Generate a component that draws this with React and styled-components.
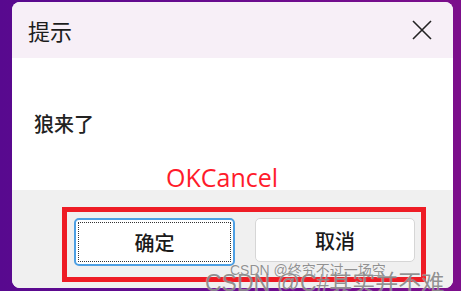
import styled, { createGlobalStyle } from 'styled-components';

const Global = createGlobalStyle`
  html, body {
    margin: 0;
    padding: 0;
    height: 291px;
    overflow: hidden;
  }
  body {
    font-family: "Noto Sans CJK SC", "Open Sans", sans-serif;
    background: linear-gradient(90deg, #58098f 0%, #6a0b8f 50%, #7c0e8b 100%);
  }
`;

const Screen = styled.div`
  position: relative;
  height: 291px;
  padding: 2px 8px 0 12px;
  box-sizing: border-box;
`;

const Dialog = styled.div`
  width: 441px;
  height: 286px;
  border-radius: 8px;
  overflow: hidden;
  display: flex;
  flex-direction: column;
  background: #fff;
`;

const TitleBar = styled.div`
  height: 56px;
  flex: none;
  background: #f7eff7;
  display: flex;
  align-items: center;
  justify-content: space-between;
  padding: 0 20px 0 16px;
`;

const Title = styled.span`
  font-size: 22px;
  color: #1c1c1c;
  line-height: 1;
`;

const Close = styled.button`
  width: 22px;
  height: 22px;
  padding: 0;
  border: 0;
  background: none;
  display: flex;
  align-items: center;
  justify-content: center;
`;

const Content = styled.div`
  height: 132px;
  flex: none;
  display: flex;
  flex-direction: column;
  padding: 56px 0 0 22px;
  box-sizing: border-box;
`;

const Message = styled.div`
  font-size: 20px;
  font-weight: 500;
  color: #222;
  line-height: 1;
`;

const Note = styled.div`
  margin: 31px 0 0 132px;
  font-family: "Open Sans", sans-serif;
  font-size: 25px;
  color: #ff1b2b;
  line-height: 1;
`;

const Footer = styled.div`
  flex: 1;
  background: #f0f0f0;
  padding: 17px 0 0 50px;
`;

const Frame = styled.div`
  width: 364px;
  height: 75px;
  box-sizing: border-box;
  border: 5px solid #ee1c25;
  display: flex;
  gap: 20px;
  padding: 6px 0 0 7px;
`;

const Button = styled.button`
  width: ${p => (p.$primary ? 161 : 160)}px;
  height: ${p => (p.$primary ? 48 : 44)}px;
  box-sizing: border-box;
  background: #fff;
  border: ${p => (p.$primary ? '2px solid #4d9fe3' : '1px solid #d6d6d6')};
  border-radius: 5px;
  outline: ${p => (p.$primary ? '1.5px dotted #333' : 'none')};
  outline-offset: -5px;
  font-family: "Noto Sans CJK SC", sans-serif;
  font-size: 20px;
  font-weight: 500;
  color: #1a1a1a;
  padding: 0;
`;

const Mark = styled.div`
  position: absolute;
  left: ${p => p.$x}px;
  top: ${p => p.$y}px;
  font-family: "Liberation Sans", "Noto Sans CJK SC", sans-serif;
  font-size: ${p => p.$size}px;
  color: rgba(110, 110, 110, 0.75);
  white-space: nowrap;
  text-shadow: 0 0 1px rgba(255, 255, 255, 0.8);
  line-height: 1;
`;

export default function App() {
  return (
    <Screen>
      <Global />
      <Dialog>
        <TitleBar>
          <Title>提示</Title>
          <Close aria-label="close">
            <svg width="20" height="20" viewBox="0 0 20 20">
              <path d="M1 1 L19 19 M19 1 L1 19" stroke="#222" strokeWidth="1.6" fill="none" />
            </svg>
          </Close>
        </TitleBar>
        <Content>
          <Message>狼来了</Message>
          <Note>OKCancel</Note>
        </Content>
        <Footer>
          <Frame>
            <Button $primary>确定</Button>
            <Button>取消</Button>
          </Frame>
        </Footer>
      </Dialog>
      <Mark $x={230} $y={263} $size={14}>CSDN @终究不过一场空</Mark>
      <Mark $x={205} $y={272} $size={23}>CSDN @C#其实并不难</Mark>
    </Screen>
  );
}
